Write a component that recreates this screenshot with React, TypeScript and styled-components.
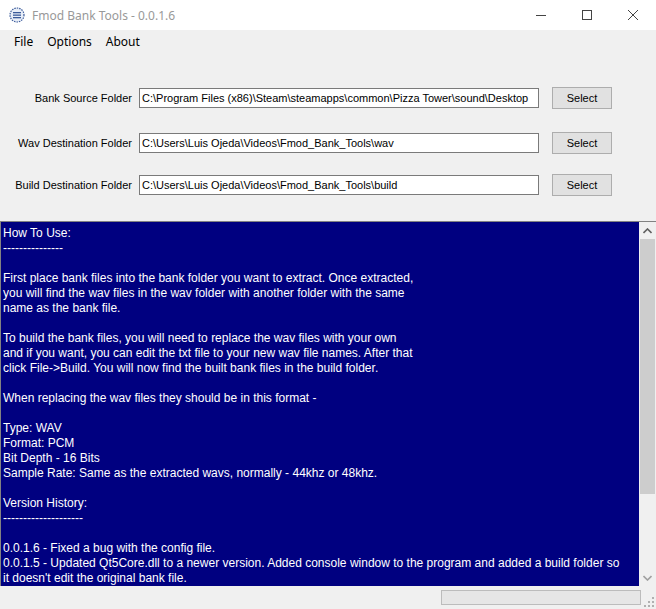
import React from "react";
import styled, { createGlobalStyle } from "styled-components";

const Global = createGlobalStyle`
  html, body { margin: 0; padding: 0; background: #f0f0f0; }
  body { width: 656px; height: 609px; overflow: hidden; font-family: "Liberation Sans", Arial, sans-serif; }
`;

const Window = styled.div`
  width: 656px; height: 609px; display: flex; flex-direction: column; background: #f0f0f0;
`;
const TitleBar = styled.div`
  height: 30px; background: #fff; display: flex; align-items: center; flex-shrink: 0;
`;
const Title = styled.div`
  font-family: "Segoe UI", "Noto Sans", sans-serif; font-size: 12px; color: #999; margin-left: 9px;
  display: flex; align-items: center; gap: 7px; flex: 1;
`;
const Caption = styled.div`
  width: 46px; height: 30px; display: flex; align-items: center; justify-content: center;
`;
const MenuBar = styled.div`
  height: 22px; display: flex; align-items: center; padding-left: 7px; gap: 0;
  font-family: "Segoe UI", "Noto Sans", sans-serif; font-size: 12px; color: #000;
`;
const MenuItem = styled.div`padding: 0 7px;`;
const Form = styled.div`
  height: 169px; display: flex; flex-direction: column; padding-top: 35px; box-sizing: border-box;
`;
const Row = styled.div<{ $mt: number }>`
  display: grid; grid-template-columns: 139px 400px 73px; align-items: center;
  margin-top: ${p => p.$mt}px;
`;
const Label = styled.div`
  font-size: 11px; text-align: right; padding-right: 7px; color: #000;
`;
const Input = styled.div`
  height: 20px; box-sizing: border-box; border: 1px solid #7a7a7a; background: #fff;
  font-size: 11px; line-height: 18px; padding-left: 2px; white-space: nowrap; overflow: hidden;
`;
const Button = styled.div`
  height: 22px; box-sizing: border-box; border: 1px solid #adadad; background: #e1e1e1;
  font-size: 11px; display: flex; align-items: center; justify-content: center; margin-left: 13px;
`;
const TextWrap = styled.div`
  height: 365px; display: flex; border-top: 1px solid #828282; border-left: 1px solid #828282; box-sizing: border-box;
`;
const TextArea = styled.div`
  flex: 1; background: #000080; color: #fff; font-size: 12px; line-height: 15px;
  padding: 4px 2px; white-space: pre; overflow: hidden;
`;
const ScrollBar = styled.div`
  width: 17px; background: #f0f0f0; display: flex; flex-direction: column; align-items: center;
`;
const Arrow = styled.div`height: 17px; display: flex; align-items: center; justify-content: center;`;
const Thumb = styled.div`width: 15px; height: 255px; background: #cdcdcd;`;
const Spacer = styled.div`flex: 1;`;
const StatusBar = styled.div`
  flex: 1; display: flex; align-items: center; justify-content: flex-end; position: relative;
`;
const Progress = styled.div`
  width: 200px; height: 15px; box-sizing: border-box; border: 1px solid #bcbcbc; background: #e6e6e6; margin-right: 15px;
`;
const Grip = styled.svg`position: absolute; right: 1px; bottom: 1px;`;

const text = `How To Use:
---------------

First place bank files into the bank folder you want to extract. Once extracted,
you will find the wav files in the wav folder with another folder with the same
name as the bank file.

To build the bank files, you will need to replace the wav files with your own
and if you want, you can edit the txt file to your new wav file names. After that
click File->Build. You will now find the built bank files in the build folder.

When replacing the wav files they should be in this format -

Type: WAV
Format: PCM
Bit Depth - 16 Bits
Sample Rate: Same as the extracted wavs, normally - 44khz or 48khz.

Version History:
--------------------

0.0.1.6 - Fixed a bug with the config file.
0.0.1.5 - Updated Qt5Core.dll to a newer version. Added console window to the program and added a build folder so
it doesn't edit the original bank file.`;

const rows = [
  ["Bank Source Folder", "C:\\Program Files (x86)\\Steam\\steamapps\\common\\Pizza Tower\\sound\\Desktop", 0],
  ["Wav Destination Folder", "C:\\Users\\Luis Ojeda\\Videos\\Fmod_Bank_Tools\\wav", 23],
  ["Build Destination Folder", "C:\\Users\\Luis Ojeda\\Videos\\Fmod_Bank_Tools\\build", 20],
] as const;

export default function App() {
  return (
    <Window>
      <Global />
      <TitleBar>
        <Title>
          <svg width="16" height="16" viewBox="0 0 16 16">
            <circle cx="8" cy="8" r="7" fill="#e8eef8" stroke="#3a5a9a" strokeWidth="1.2" strokeDasharray="1.5 1" />
            <rect x="4" y="5" width="8" height="1.3" fill="#3a5a9a" />
            <rect x="4" y="7.5" width="8" height="1.3" fill="#3a5a9a" />
            <rect x="4" y="10" width="8" height="1.3" fill="#3a5a9a" />
          </svg>
          Fmod Bank Tools - 0.0.1.6
        </Title>
        <Caption>
          <svg width="12" height="12"><line x1="1" y1="6.5" x2="11" y2="6.5" stroke="#444" /></svg>
        </Caption>
        <Caption>
          <svg width="12" height="12"><rect x="1.5" y="1.5" width="9" height="9" fill="none" stroke="#444" /></svg>
        </Caption>
        <Caption>
          <svg width="12" height="12"><path d="M1 1L11 11M11 1L1 11" stroke="#444" /></svg>
        </Caption>
      </TitleBar>
      <MenuBar>
        <MenuItem>File</MenuItem>
        <MenuItem>Options</MenuItem>
        <MenuItem>About</MenuItem>
      </MenuBar>
      <Form>
        {rows.map(([l, v, mt]) => (
          <Row key={l} $mt={mt}>
            <Label>{l}</Label>
            <Input>{v}</Input>
            <Button>Select</Button>
          </Row>
        ))}
      </Form>
      <TextWrap>
        <TextArea>{text}</TextArea>
        <ScrollBar>
          <Arrow>
            <svg width="9" height="6"><path d="M0.5 5L4.5 1L8.5 5" fill="none" stroke="#606060" strokeWidth="1.6" /></svg>
          </Arrow>
          <Thumb />
          <Spacer />
          <Arrow>
            <svg width="9" height="6"><path d="M0.5 1L4.5 5L8.5 1" fill="none" stroke="#a0a0a0" strokeWidth="1.6" /></svg>
          </Arrow>
        </ScrollBar>
      </TextWrap>
      <StatusBar>
        <Progress />
        <Grip width="12" height="12">
          {[[9, 1], [9, 5], [5, 5], [9, 9], [5, 9], [1, 9]].map(([x, y], i) => (
            <rect key={i} x={x} y={y} width="2" height="2" fill="#b0b0b0" />
          ))}
        </Grip>
      </StatusBar>
    </Window>
  );
}
